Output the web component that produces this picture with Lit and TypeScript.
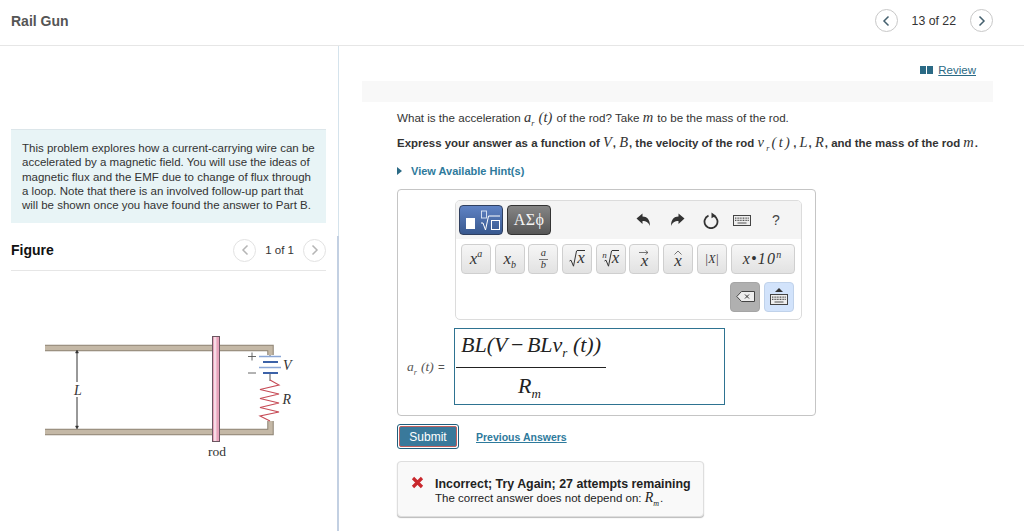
import { LitElement, html, css, svg } from 'lit';
import { customElement } from 'lit/decorators.js';

const keyboardIcon = () => html`
  <svg width="18" height="11" viewBox="0 0 18 11">
    <rect x="0.5" y="0.5" width="17" height="10" fill="#eee" stroke="#444"></rect>
    <path d="M2 3.200h14M2 5.400h14" stroke="#555" stroke-width="1.200" stroke-dasharray="1 .6"></path>
    <path d="M4.500 8h9" stroke="#555" stroke-width="1"></path>
  </svg>`;

@customElement('rg-pager')
export class PagerElement extends LitElement {
  static properties = { label: {}, faint: { type: Boolean, reflect: true } };
  label = '';
  faint = false;

  static styles = css`
    :host {
      display: flex;
      align-items: center;
      gap: 9px;
      font-size: 11.5px;
      color: #333;
    }
    .arrow {
      width: 23px;
      height: 23px;
      box-sizing: border-box;
      border: 1px solid #c8c8c8;
      border-radius: 50%;
      display: flex;
      align-items: center;
      justify-content: center;
    }
    .arrow path { stroke: #44606e; }
    :host([faint]) .arrow { border-color: #e2e2e2; }
    :host([faint]) .arrow path { stroke: #b5b5b5; }
  `;

  render() {
    return html`
      <span class="arrow"><svg width="8" height="12" viewBox="0 0 8 12"><path d="M6.500 1.500 2 6l4.500 4.500" fill="none" stroke-width="1.500"></path></svg></span>
      <span>${this.label}</span>
      <span class="arrow"><svg width="8" height="12" viewBox="0 0 8 12"><path d="M1.500 1.500 6 6l-4.500 4.500" fill="none" stroke-width="1.500"></path></svg></span>
    `;
  }
}

@customElement('rg-figure')
export class FigureElement extends LitElement {
  static styles = css`
    :host { display: block; }
    svg { display: block; }
    text { font-family: "Liberation Serif", serif; fill: #333; }
  `;

  render() {
    return html`
      <svg width="337" height="260" viewBox="0 271 337 260">
        ${svg`
          <path d="M45 348H270.500V355M45 432H270.500V421" fill="none" stroke="#8f8474" stroke-width="6.500"></path>
          <path d="M45 348H270.500V355M45 432H270.500V421" fill="none" stroke="#c4b8a6" stroke-width="4.400"></path>
          <rect x="212.500" y="336.500" width="7" height="105" fill="#e8a3bb" stroke="#6b5560"></rect>
          <rect x="214" y="337" width="2.400" height="104" fill="#f7dbe5"></rect>
          <path d="M77 351V382M77 397V428" stroke="#333" stroke-width="1"></path>
          <path d="M75.500 353 77 350l1.500 3zM75.500 426 77 429l1.500-3z" fill="#333" stroke="#333" stroke-width=".5"></path>
          <path d="M270 355V357M270 373V381" stroke="#555" stroke-width="1"></path>
          <path d="M259 356.500H281M259 367.500H281" stroke="#8aa6d6" stroke-width="1.300"></path>
          <path d="M263 362H278M263 373H278" stroke="#3c62a8" stroke-width="1.800"></path>
          <path d="M270 380 279 385 260 389.500 279 394 260 398.500 279 403 260 407.500 279 412 260 416 270 421" fill="none" stroke="#c64a55" stroke-width="1.100"></path>
          <path d="M248 356.500H256M252 352.500V360.500M248 373H256" stroke="#555" stroke-width=".9"></path>
          <text x="78" y="395" font-size="14" font-style="italic" text-anchor="middle">L</text>
          <text x="283" y="370" font-size="14" font-style="italic">V</text>
          <text x="282.500" y="404" font-size="14" font-style="italic">R</text>
          <text x="217" y="456" font-size="13.500" text-anchor="middle">rod</text>
        `}
      </svg>
    `;
  }
}

@customElement('rg-toolbar')
export class ToolbarElement extends LitElement {
  static styles = css`
    :host {
      display: block;
      width: 347px;
      height: 120px;
      box-sizing: border-box;
      border: 1px solid #dcdcdc;
      border-radius: 5px;
      overflow: hidden;
      background: #fff;
    }
    .top {
      display: flex;
      align-items: center;
      height: 38px;
      padding-left: 3px;
      box-sizing: border-box;
      background: #f4f4f4;
    }
    .mode {
      width: 44px;
      height: 30px;
      box-sizing: border-box;
      border-radius: 4px;
      border: 1px solid #2f3f5f;
      display: flex;
      align-items: center;
      justify-content: center;
      margin-right: 4px;
    }
    .mode.templates { background: linear-gradient(#5f82c4, #38588f); }
    .mode.symbols {
      background: linear-gradient(#858585, #565656);
      border-color: #333;
      color: #f4f4f4;
      font: 16px "Liberation Serif", serif;
      letter-spacing: .4px;
    }
    .actions {
      display: grid;
      grid-template-columns: 34px 33px 30px 39px auto;
      align-items: center;
      margin-left: 81px;
    }
    .help { font-size: 14px; color: #444; }
    .row {
      display: flex;
      gap: 3.700px;
      padding: 5px 0 0 5px;
    }
    .row.right { justify-content: flex-end; padding: 7.500px 7px 0 0; }
    .key {
      width: 30px;
      height: 30px;
      box-sizing: border-box;
      border: 1px solid #cfcfcf;
      border-radius: 4px;
      background: linear-gradient(#f6f6f6, #e2e2e2);
      display: flex;
      align-items: center;
      justify-content: center;
      font: italic 17px "Liberation Serif", serif;
      color: #333;
    }
    .key.wide { width: 64px; font-size: 16px; letter-spacing: 1.200px; }
    .key.back { background: #b0b0b0; border-color: #a5a5a5; }
    .key.pad { background: #d2e3fb; border-color: #c0d2ea; flex-direction: column; gap: 2px; }
    sup, sub { font-size: 10px; line-height: 0; }
    .frac { display: flex; flex-direction: column; align-items: center; font-size: 10.500px; line-height: 10px; }
    .frac i:first-child { border-bottom: 1px solid #777; padding: 0 2px 1px; }
    .over { display: flex; flex-direction: column; align-items: center; line-height: 14px; }
    .over svg { display: block; margin-bottom: -1px; }
    .rad { border-top: 1px solid #333; line-height: 14px; display: inline-block; }
    .root { display: flex; align-items: flex-start; }
    .root sup { line-height: 10px; font-size: 9px; margin-right: -3px; }
    .root svg { display: block; }
    .small { font-size: 12px; }
  `;

  render() {
    return html`
      <div class="top">
        <div class="mode templates">
          <svg width="42" height="28" viewBox="0 0 42 28">
            <rect x="6" y="12" width="9" height="11" fill="#fff"></rect>
            <path d="M21 17l2 0 2.500 7 3-14H40" fill="none" stroke="#fff" stroke-width="1"></path>
            <rect x="21.500" y="5" width="5" height="7" fill="none" stroke="#dfe8f6" stroke-width=".9"></rect>
            <rect x="31.500" y="14.500" width="8" height="9" fill="none" stroke="#fff" stroke-width="1"></rect>
          </svg>
        </div>
        <div class="mode symbols">ΑΣϕ</div>
        <div class="actions">
          <svg width="15" height="14" viewBox="0 0 15 14"><path d="M.5 5.500 6.500.5v3c4.500 0 7.500 3 7.500 9.500-1.500-3.500-3.500-5-7.500-5v3z" fill="#333"></path></svg>
          <svg width="15" height="14" viewBox="0 0 15 14"><path d="M14.500 5.500 8.500.5v3C4 3.500 1 6.500 1 13c1.500-3.500 3.500-5 7.500-5v3z" fill="#333"></path></svg>
          <svg width="16" height="17" viewBox="0 0 16 17"><path d="M10.500 3.700a6.500 6.500 0 1 1-5 0" fill="none" stroke="#333" stroke-width="1.800"></path><path d="M8.500 .5l4.500 3.200-4.500 2.600z" fill="#333"></path></svg>
          ${keyboardIcon()}
          <span class="help">?</span>
        </div>
      </div>
      <div class="row">
        <div class="key"><span>x<sup>a</sup></span></div>
        <div class="key"><span>x<sub>b</sub></span></div>
        <div class="key"><span class="frac"><i>a</i><i>b</i></span></div>
        <div class="key"><span class="root"><svg width="8" height="18" viewBox="0 0 8 18"><path d="M.5 11l1.500-.8 2.500 6L7.500 1H8" fill="none" stroke="#333"></path></svg><span class="rad">x</span></span></div>
        <div class="key"><span class="root"><sup>n</sup><svg width="8" height="18" viewBox="0 0 8 18"><path d="M.5 11l1.500-.8 2.500 6L7.500 1H8" fill="none" stroke="#333"></path></svg><span class="rad">x</span></span></div>
        <div class="key"><span class="over"><svg width="10" height="5" viewBox="0 0 10 5"><path d="M0 2.500h9M6.500.5 9 2.500 6.500 4.500" fill="none" stroke="#555" stroke-width=".8"></path></svg><span>x</span></span></div>
        <div class="key"><span class="over"><svg width="8" height="5" viewBox="0 0 8 5"><path d="M.5 4.500 4 1l3.500 3.500" fill="none" stroke="#555" stroke-width=".8"></path></svg><span>x</span></span></div>
        <div class="key"><span class="small">|X|</span></div>
        <div class="key wide"><span>x•10<sup>n</sup></span></div>
      </div>
      <div class="row right">
        <div class="key back">
          <svg width="19" height="11" viewBox="0 0 19 11"><path d="M.8 5.500 5.500.5h13v10h-13z" fill="#eee" stroke="#444"></path><path d="M9 3.500l4 4M13 3.500l-4 4" stroke="#333"></path></svg>
        </div>
        <div class="key pad">
          <svg width="8" height="4" viewBox="0 0 8 4"><path d="M0 4 4 0l4 4z" fill="#333"></path></svg>
          ${keyboardIcon()}
        </div>
      </div>
    `;
  }
}

@customElement('app-root')
export class AppRoot extends LitElement {
  static styles = css`
    :host {
      display: block;
      width: 1024px;
      height: 531px;
      overflow: hidden;
      background: #fff;
      font-family: "Liberation Sans", Arial, sans-serif;
      color: #333;
    }
    .header {
      display: flex;
      align-items: center;
      justify-content: space-between;
      height: 46px;
      box-sizing: border-box;
      padding: 0 31px 4px 11px;
      border-bottom: 1px solid #e6e6e6;
    }
    .header h1 {
      margin: 0;
      font-size: 14px;
      font-weight: bold;
      color: #555;
    }
    .header rg-pager { gap: 14px; font-size: 12.300px; }
    .main { display: flex; height: 485px; }
    .left {
      position: relative;
      width: 339px;
      box-sizing: border-box;
      padding: 83px 12px 0 11px;
      border-right: 1px solid #d5e3ec;
      flex-shrink: 0;
    }
    .left::after {
      content: "";
      position: absolute;
      right: -1px;
      top: 190px;
      bottom: 0;
      width: 2px;
      background: #c3d0e2;
    }
    .intro {
      background: #e8f4f6;
      border-top: 1px solid #dce6ea;
      padding: 11px 11px 0;
      font-size: 11.500px;
      line-height: 14.250px;
      height: 94px;
      box-sizing: border-box;
    }
    .figure-head {
      display: flex;
      align-items: center;
      justify-content: space-between;
      height: 48px;
      padding-top: 7px;
      box-sizing: border-box;
      border-bottom: 1px solid #e6e6e6;
    }
    .figure-head h2 { margin: 0; font-size: 14px; font-weight: bold; color: #111; }
    rg-figure { margin-left: -11px; }
    .right { flex: 1; padding: 0 31px 0 23px; min-width: 0; }
    .review {
      display: flex;
      justify-content: flex-end;
      align-items: center;
      height: 35px;
      padding: 12px 17px 0 0;
      box-sizing: border-box;
      font-size: 11.500px;
      color: #2b6a85;
      gap: 5px;
    }
    .review span { text-decoration: underline; }
    .bar { height: 21px; background: #f8f8f8; }
    .body { padding: 0 0 0 35px; font-size: 11.600px; color: #333; }
    .body p { margin: 0; }
    .question { padding-top: 9px; line-height: 14px; }
    .express { padding-top: 11px; line-height: 14px; font-weight: bold; font-size: 11.450px; }
    .hint {
      display: flex;
      align-items: center;
      gap: 9px;
      margin-top: 14px;
      height: 14px;
      font-size: 11px;
      font-weight: bold;
      color: #2e7a9c;
    }
    .hint::before {
      content: "";
      border-left: 5px solid #2b6a85;
      border-top: 4px solid transparent;
      border-bottom: 4px solid transparent;
    }
    .m {
      font-family: "Liberation Serif", serif;
      font-style: italic;
      font-weight: normal;
      font-size: 14.500px;
      line-height: 0;
      padding-right: 1px;
    }
    .m.spaced { letter-spacing: 2.300px; }
    .m sub { font-size: 8px; line-height: 0; }
    .panel {
      width: 419px;
      height: 227px;
      box-sizing: border-box;
      margin-top: 11px;
      padding: 10px 13px 0 57px;
      border: 1px solid #c5c5c5;
      border-radius: 4px;
    }
    .answer { display: flex; align-items: center; margin: 8px 0 0 -48px; }
    .answer .label { width: 47px; font-size: 11.500px; color: #555; white-space: nowrap; }
    .answer .label .m { font-size: 13.500px; }
    .input {
      width: 271px;
      height: 77px;
      box-sizing: border-box;
      border: 1px solid #2e7391;
      padding-left: 1px;
      font-family: "Liberation Serif", serif;
      font-style: italic;
      font-size: 22px;
      color: #222;
    }
    .frac { width: 150px; text-align: center; }
    .num { height: 39px; line-height: 31px; border-bottom: 1px solid #222; box-sizing: border-box; white-space: nowrap; }
    .minus { margin: 0 3.500px; font-style: normal; }
    .den { height: 36px; line-height: 35px; padding-right: 3px; }
    .input sub { font-size: 13px; line-height: 0; }
    .actions {
      display: flex;
      align-items: center;
      gap: 17px;
      margin-top: 8px;
    }
    .submit {
      width: 62px;
      height: 25px;
      box-sizing: border-box;
      border: 1px solid #1f5f7d;
      border-radius: 3px;
      padding: 1px;
      background: #fff;
    }
    .submit div {
      height: 100%;
      box-sizing: border-box;
      border: 1px solid #c0605f;
      border-radius: 2px;
      background: #39799b;
      color: #fff;
      font-size: 12px;
      display: flex;
      align-items: center;
      justify-content: center;
    }
    .prev { font-size: 10.500px; font-weight: bold; color: #2e7a9c; text-decoration: underline; }
    .feedback {
      display: flex;
      gap: 11px;
      width: 307px;
      height: 56px;
      box-sizing: border-box;
      margin-top: 12px;
      padding: 15px 0 0 13px;
      background: #f9f9f9;
      border: 1px solid #dedede;
      border-radius: 4px;
      box-shadow: 0 1px 1px #bbb;
      color: #222;
    }
    .feedback svg { flex-shrink: 0; margin-top: -1px; }
    .feedback b { display: block; font-size: 12.400px; line-height: 14px; }
    .feedback span { font-size: 11.500px; line-height: 15px; }
    .feedback .m { font-size: 14px; line-height: 0; }
  `;

  render() {
    return html`
      <div class="header">
        <h1>Rail Gun</h1>
        <rg-pager label="13 of 22"></rg-pager>
      </div>
      <div class="main">
        <section class="left">
          <div class="intro">
            This problem explores how a current-carrying wire can be accelerated by a magnetic field. You will use the ideas of magnetic flux and the EMF due to change of flux through a loop. Note that there is an involved follow-up part that will be shown once you have found the answer to Part B.
          </div>
          <div class="figure-head">
            <h2>Figure</h2>
            <rg-pager label="1 of 1" faint></rg-pager>
          </div>
          <rg-figure></rg-figure>
        </section>
        <section class="right">
          <div class="review">
            <svg width="13" height="8" viewBox="0 0 13 8"><path d="M0 0h6v8H0zM7 0h6v8H7z" fill="#2b6a85"></path></svg>
            <span>Review</span>
          </div>
          <div class="bar"></div>
          <div class="body">
            <p class="question">What is the acceleration <span class="m">a<sub>r</sub></span> <span class="m">(t)</span> of the rod? Take <span class="m">m</span> to be the mass of the rod.</p>
            <p class="express">Express your answer as a function of <span class="m">V</span>, <span class="m">B</span>, the velocity of the rod <span class="m spaced">v<sub>r</sub>(t)</span>, <span class="m">L</span>, <span class="m">R</span>, and the mass of the rod <span class="m">m</span>.</p>
            <div class="hint">View Available Hint(s)</div>
            <div class="panel">
              <rg-toolbar></rg-toolbar>
              <div class="answer">
                <div class="label"><span class="m">a<sub>r</sub></span> <span class="m">(t)</span> =</div>
                <div class="input">
                  <div class="frac">
                    <div class="num">BL(V<span class="minus">−</span>BLv<sub>r</sub> (t))</div>
                    <div class="den">R<sub>m</sub></div>
                  </div>
                </div>
              </div>
            </div>
            <div class="actions">
              <div class="submit"><div>Submit</div></div>
              <span class="prev">Previous Answers</span>
            </div>
            <div class="feedback">
              <svg width="13" height="13" viewBox="0 0 13 13"><path d="M2 2l9 9M11 2l-9 9" stroke="#c9282d" stroke-width="3.200"></path></svg>
              <div>
                <b>Incorrect; Try Again; 27 attempts remaining</b>
                <span>The correct answer does not depend on: <span class="m">R<sub>m</sub></span>.</span>
              </div>
            </div>
          </div>
        </section>
      </div>
    `;
  }
}
